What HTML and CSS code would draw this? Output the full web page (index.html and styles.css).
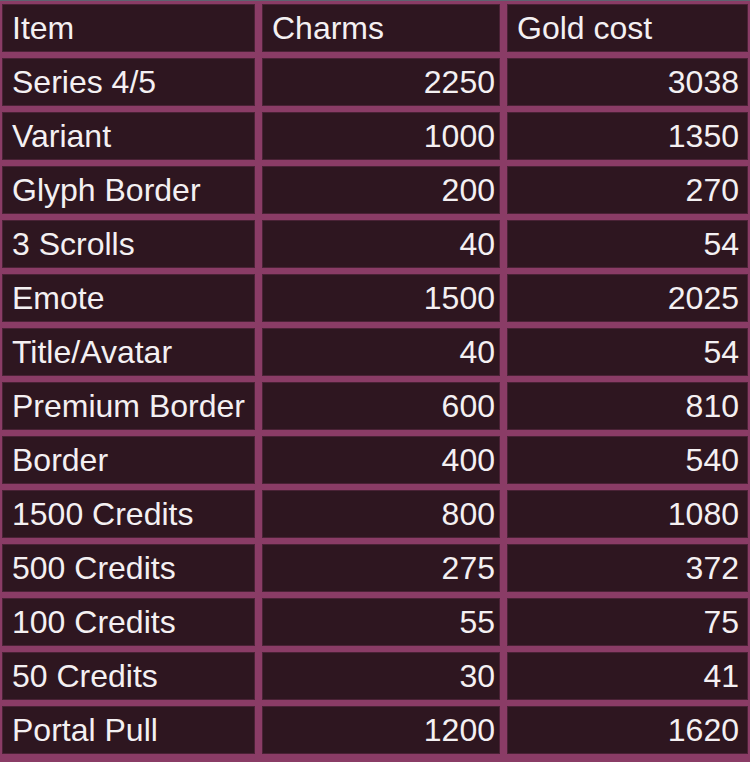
FILE: index.html
```html
<!DOCTYPE html>
<html>
<head>
<meta charset="utf-8">
<link rel="stylesheet" href="styles.css">
</head>
<body>
<div class="table">
  <div class="cell">Item</div><div class="cell">Charms</div><div class="cell">Gold cost</div>
  <div class="cell">Series 4/5</div><div class="cell num">2250</div><div class="cell num last">3038</div>
  <div class="cell">Variant</div><div class="cell num">1000</div><div class="cell num last">1350</div>
  <div class="cell">Glyph Border</div><div class="cell num">200</div><div class="cell num last">270</div>
  <div class="cell">3 Scrolls</div><div class="cell num">40</div><div class="cell num last">54</div>
  <div class="cell">Emote</div><div class="cell num">1500</div><div class="cell num last">2025</div>
  <div class="cell">Title/Avatar</div><div class="cell num">40</div><div class="cell num last">54</div>
  <div class="cell">Premium Border</div><div class="cell num">600</div><div class="cell num last">810</div>
  <div class="cell">Border</div><div class="cell num">400</div><div class="cell num last">540</div>
  <div class="cell">1500 Credits</div><div class="cell num">800</div><div class="cell num last">1080</div>
  <div class="cell">500 Credits</div><div class="cell num">275</div><div class="cell num last">372</div>
  <div class="cell">100 Credits</div><div class="cell num">55</div><div class="cell num last">75</div>
  <div class="cell">50 Credits</div><div class="cell num">30</div><div class="cell num last">41</div>
  <div class="cell">Portal Pull</div><div class="cell num">1200</div><div class="cell num last">1620</div>
</div>
</body>
</html>
```
FILE: styles.css
```css
html, body {
  margin: 0;
  padding: 0;
  background: #8a3c66;
  overflow: hidden;
}
body {
  width: 750px;
  height: 762px;
  border-top: 1px solid #5e6470;
  box-sizing: border-box;
}
.table {
  display: grid;
  grid-template-columns: 253px 238px 241px;
  grid-auto-rows: 48px;
  column-gap: 7px;
  row-gap: 6px;
  padding: 3px 2px 0 2px;
}
.cell {
  background: #2e1620;
  border: 1px solid #4a2236;
  box-sizing: border-box;
  color: #f4f0f2;
  font-family: "Liberation Sans", Arial, sans-serif;
  font-size: 32px;
  display: flex;
  align-items: center;
  padding: 0 9px;
  white-space: nowrap;
}
.num {
  justify-content: flex-end;
  padding: 0 4px 0 9px;
}
.num.last {
  padding-right: 8px;
}
```
